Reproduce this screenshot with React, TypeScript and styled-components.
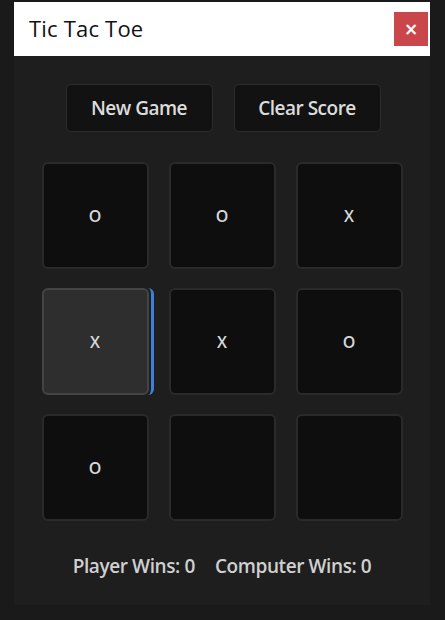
import React from "react";
import styled, { createGlobalStyle } from "styled-components";

const board = ["O", "O", "X", "X", "X", "O", "O", "", ""];

const GlobalStyle = createGlobalStyle`
  html, body {
    margin: 0;
    padding: 0;
    background: #1a1a1a;
  }
`;

function App() {
  return (
    <>
      <GlobalStyle />
      <Page>
        <Window>
          <TitleBar>
            <Title>Tic Tac Toe</Title>
            <CloseButton aria-label="Close">×</CloseButton>
          </TitleBar>
          <Body>
            <Actions>
              <ActionButton>New Game</ActionButton>
              <ActionButton>Clear Score</ActionButton>
            </Actions>
            <Board>
              {board.map((value, i) => (
                <Cell key={i} $focused={i === 3}>
                  {value}
                </Cell>
              ))}
            </Board>
            <Score>
              <span>Player Wins: 0</span>
              <span>Computer Wins: 0</span>
            </Score>
          </Body>
        </Window>
      </Page>
    </>
  );
}

const Page = styled.div`
  width: 445px;
  height: 620px;
  padding: 2px 0 0 14px;
  box-sizing: border-box;
`;

const Window = styled.div`
  width: 416px;
  height: 603px;
  background: #1e1e1e;
  display: flex;
  flex-direction: column;
`;

const TitleBar = styled.div`
  height: 54px;
  background: #ffffff;
  display: flex;
  align-items: center;
  justify-content: space-between;
  padding: 0 2px 0 15px;
`;

const Title = styled.div`
  font-family: "Open Sans", sans-serif;
  font-size: 22px;
  color: #111;
  margin-top: -2px;
  letter-spacing: 0.2px;
`;

const CloseButton = styled.button`
  width: 34px;
  height: 34px;
  border: none;
  padding: 0;
  background: #c9474a;
  color: #fff;
  font-family: "DejaVu Sans", sans-serif;
  font-weight: 700;
  font-size: 17px;
  line-height: 34px;
`;

const Body = styled.div`
  display: flex;
  flex-direction: column;
  align-items: center;
  padding-top: 28px;
`;

const Actions = styled.div`
  display: flex;
  gap: 21px;
  margin-left: 2px;
`;

const ActionButton = styled.button`
  width: 147px;
  height: 48px;
  background: #121212;
  border: 1px solid #2c2c2c;
  border-radius: 5px;
  color: #dcdcdc;
  font-family: "Open Sans", sans-serif;
  font-size: 19px;
  font-weight: 600;
  letter-spacing: -0.5px;
`;

const Board = styled.div`
  display: grid;
  grid-template-columns: repeat(3, 107px);
  grid-auto-rows: 107px;
  column-gap: 20px;
  row-gap: 19px;
  margin-top: 30px;
`;

const Cell = styled.button<{ $focused?: boolean }>`
  position: relative;
  background: ${(p) => (p.$focused ? "#2e2e2e" : "#0e0e0e")};
  border: 2px solid ${(p) => (p.$focused ? "#444444" : "#2a2a2a")};
  border-radius: 6px;
  color: #d8d8d8;
  font-family: "Open Sans", sans-serif;
  font-size: 16px;
  font-weight: 600;
  padding: 0;

  ${(p) =>
    p.$focused &&
    `
    &::after {
      content: "";
      position: absolute;
      top: -2px;
      bottom: -2px;
      right: -7px;
      width: 6px;
      border-right: 3px solid #3d7fd9;
      border-radius: 0 6px 6px 0;
    }
  `}
`;

const Score = styled.div`
  display: flex;
  gap: 20px;
  margin-top: 32px;
  font-family: "Open Sans", sans-serif;
  font-size: 19px;
  font-weight: 600;
  letter-spacing: -0.4px;
  color: #d0d0d0;
`;

export default App;
